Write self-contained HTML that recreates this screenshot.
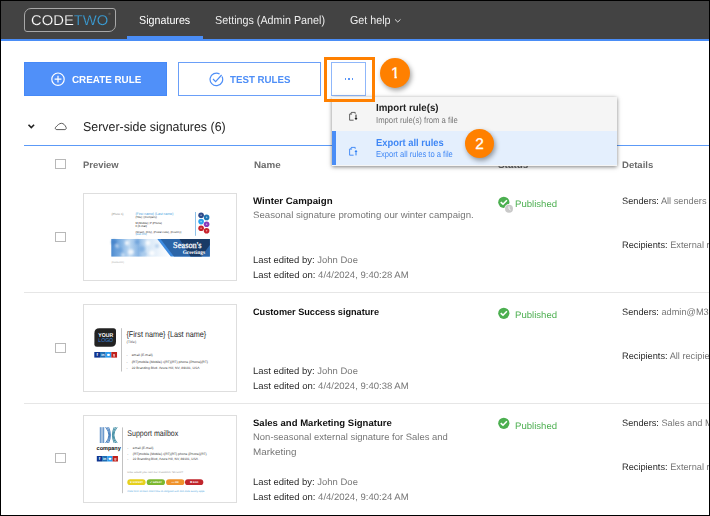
<!DOCTYPE html>
<html lang="en">
<head>
<meta charset="utf-8">
<title>CodeTwo Signatures</title>
<style>
html,body{margin:0;padding:0;}
body{width:710px;height:516px;position:relative;overflow:hidden;background:#fff;font-family:"Liberation Sans",sans-serif;color:#222;text-rendering:geometricPrecision;}
.abs{position:absolute;}
.t{position:absolute;white-space:nowrap;transform-origin:0 50%;line-height:1;}
#frame{position:absolute;left:0;top:0;width:708px;height:514px;border:1px solid #000;z-index:50;pointer-events:none;}
#hdr{left:1px;top:1px;width:708px;height:38px;background:#434343;}
#hline{left:1px;top:38.8px;width:708px;height:2.3px;background:#4a8df6;}
#tabline{left:127px;top:35.8px;width:75.8px;height:5px;background:#4a8df6;}
#logo{left:24px;top:8px;width:90px;height:22px;border:1px solid #a8a8a8;border-radius:7px 3px 7px 3px;background:#3e3e3e;}
.nav{color:#eee;font-size:11.6px;}
.btn{box-sizing:border-box;}
#create{left:24px;top:62px;width:143.4px;height:33.9px;background:#5090f9;border:1px solid #4689f7;}
#test{left:178px;top:61.8px;width:143px;height:34.4px;border:1px solid #6a9ff8;}
#more{left:331.2px;top:61.8px;width:35px;height:34.5px;border:1px solid #8fb7fa;}
#orect{left:324px;top:57px;width:51px;height:45px;border:3px solid #ff8000;box-sizing:border-box;}
.ball{border-radius:50%;background:#ff8000;box-shadow:1.5px 2.5px 5px rgba(0,0,0,.38);}
#menu{left:332px;top:97px;width:285.3px;height:68.5px;background:#f5f5f5;box-shadow:0 1px 4px rgba(0,0,0,.5);}
#mi2{left:0;top:34.4px;width:285.3px;height:34.1px;background:#e4effd;}
#mi2bar{left:0;top:34.4px;width:3.7px;height:34.1px;background:#4a8df6;}
.dot{top:78.1px;width:1.5px;height:1.7px;background:#5a96f7;}
.hd{font-weight:bold;color:#6b6b6b;font-size:9.3px;}
.cb{width:9px;height:8px;border:1px solid #b8b8b8;background:#fff;}
.thumb{left:83.4px;width:151.4px;height:86px;border:1px solid #dedede;background:#fff;}
.sep{left:24px;width:685px;height:1px;background:#e6e6e6;}
.nm{font-weight:bold;font-size:9.3px;color:#111;}
.gr{font-size:9.3px;color:#767676;}
.bk{font-size:9.3px;color:#2a2a2a;}
.pub{font-size:9.3px;color:#4caf50;}
</style>
</head>
<body>
<div class="abs" id="hdr"></div>
<div class="abs" id="hline"></div>
<div class="abs" id="tabline"></div>
<div class="abs" id="logo"></div>
<div class="t" id="lg" style="left:30.7px;top:14.0px;transform:scaleX(1.043);font-size:14.2px;color:#fff;-webkit-text-stroke:0.22px #3d3d3d;">CODE<span style="color:#3b9fd8">TWO</span></div>
<div class="t" id="reg" style="left:108.3px;top:13.2px;font-size:3.2px;color:#8a8a8a">®</div>
<div class="t nav" id="n1" style="left:139.0px;top:15.1px;transform:scaleX(0.924);color:#fff">Signatures</div>
<div class="t nav" id="n2" style="left:215.0px;top:15.1px;transform:scaleX(0.928);">Settings (Admin Panel)</div>
<div class="t nav" id="n3" style="left:349.8px;top:15.1px;transform:scaleX(0.926);">Get help</div>
<svg class="abs" style="left:393px;top:17px" width="10" height="8" viewBox="0 0 10 8"><path d="M2 2.4 L4.75 5 L7.5 2.4" fill="none" stroke="#ddd" stroke-width="1"/></svg>

<div class="abs btn" id="create"></div>
<svg class="abs" style="left:50px;top:71px" width="16" height="16" viewBox="0 0 16 16"><circle cx="8" cy="8.2" r="6.2" fill="none" stroke="#fff" stroke-width="1.2"/><path d="M8 4.8v6.8M4.6 8.2h6.8" stroke="#fff" stroke-width="1.2"/></svg>
<div class="t" id="b1" style="left:71.8px;top:76.0px;transform:scaleX(0.966);font-size:10.2px;font-weight:bold;color:#fff">CREATE RULE</div>
<div class="abs btn" id="test"></div>
<svg class="abs" style="left:208px;top:71px" width="16" height="16" viewBox="0 0 16 16"><path d="M14 5.6A6.3 6.3 0 1 1 11.6 3" fill="none" stroke="#4f8ff7" stroke-width="1.2"/><path d="M5 8l2.6 2.6 6-6.6" fill="none" stroke="#4f8ff7" stroke-width="1.2"/></svg>
<div class="t" id="b2" style="left:229.5px;top:76.0px;transform:scaleX(0.953);font-size:10.2px;font-weight:bold;color:#4f8ff7">TEST RULES</div>
<div class="abs btn" id="more"></div>
<div class="abs dot" style="left:344.5px"></div>
<div class="abs dot" style="left:348.1px"></div>
<div class="abs dot" style="left:351.7px"></div>

<!-- section header -->
<svg class="abs" style="left:27px;top:122px" width="9" height="8" viewBox="0 0 9 8"><path d="M1.5 2.8L4.3 5.6L7.1 2.8" fill="none" stroke="#222" stroke-width="1.6"/></svg>
<svg class="abs" style="left:53px;top:121px" width="16" height="11" viewBox="53 121 16 11"><path d="M56.8 129.6H64.9A1.5 1.5 0 0 0 66.1 127.4C65.2 125.3 63.6 123.3 61.4 123.3C59.3 123.3 57.6 125.2 55.7 127.2A1.4 1.4 0 0 0 56.8 129.6Z" fill="none" stroke="#4a4a4a" stroke-width="0.9"/></svg>
<div class="t" id="sh" style="left:83.2px;top:120.7px;transform:scaleX(0.969);font-size:12.8px;color:#222">Server-side signatures (6)</div>
<div class="abs" style="left:24px;top:145px;width:685px;height:1px;background:#5c9af7"></div>

<!-- table header -->
<div class="abs cb" style="left:55px;top:159px"></div>
<div class="t hd" id="h1" style="left:83.4px;top:160.5px;transform:scaleX(1.015);">Preview</div>
<div class="t hd" id="h2" style="left:254.0px;top:160.5px;transform:scaleX(1.054);">Name</div>
<div class="t hd" id="h3" style="left:498.2px;top:160.5px;transform:scaleX(1.066);">Status</div>
<div class="t hd" id="h4" style="left:622.3px;top:160.5px;transform:scaleX(1.026);">Details</div>

<!-- row 1 -->
<div class="abs cb" style="left:55px;top:232px"></div>
<div class="abs thumb" id="th1" style="top:193.4px"></div>
<!--TH1--><svg class="abs" style="left:84px;top:193px" width="152" height="88" viewBox="84 193 152 88"><defs><linearGradient id="sn" x1="0" y1="0" x2="1" y2="0"><stop offset="0" stop-color="#4c8bd0"/><stop offset=".15" stop-color="#7fb0e2"/><stop offset=".3" stop-color="#bfd9f2"/><stop offset=".45" stop-color="#8ab6e4"/><stop offset=".6" stop-color="#d3e5f6"/><stop offset=".8" stop-color="#eef5fc"/><stop offset="1" stop-color="#ffffff"/></linearGradient><filter id="bl" x="-20%" y="-20%" width="140%" height="140%"><feGaussianBlur stdDeviation="0.8"/></filter></defs><text x="111.5" y="215.2" font-size="3" fill="#8a8a8a" textLength="12" lengthAdjust="spacingAndGlyphs">{Photo 1}</text><text x="135.4" y="215" font-size="3.6" fill="#4a9fe0" textLength="38" lengthAdjust="spacingAndGlyphs">{First name} {Last name}</text><text x="135.4" y="217.7" font-size="2.9" fill="#333" textLength="21.5" lengthAdjust="spacingAndGlyphs">{Title} | {Company}</text><text x="135.4" y="224.3" font-size="2.9" fill="#222" textLength="26.5" lengthAdjust="spacingAndGlyphs">M {Mobile} | P {Phone}</text><text x="135.4" y="226.7" font-size="2.9" fill="#222" textLength="11.5" lengthAdjust="spacingAndGlyphs">E {E-mail}</text><text x="135.4" y="232.6" font-size="2.9" fill="#333" textLength="46" lengthAdjust="spacingAndGlyphs">{Street}, {City}, {Postal code}, {Country}</text><text x="135.4" y="235" font-size="2.9" fill="#4a9fe0" textLength="11.5" lengthAdjust="spacingAndGlyphs">{web link}</text><rect x="195.2" y="212" width="0.7" height="23.8" fill="#5fa8e0"/><circle cx="201.1" cy="215.2" r="2.8" fill="#2d4a8a"/><circle cx="201.1" cy="215.2" r="0.8" fill="#fff" opacity=".55"/><circle cx="206.6" cy="217.4" r="2.8" fill="#1f76b4"/><circle cx="206.6" cy="217.4" r="0.8" fill="#fff" opacity=".55"/><circle cx="201.1" cy="221.6" r="2.8" fill="#2aa3ef"/><circle cx="201.1" cy="221.6" r="0.8" fill="#fff" opacity=".55"/><circle cx="206.6" cy="224.2" r="2.8" fill="#8a3ab9"/><circle cx="206.6" cy="224.2" r="0.8" fill="#fff" opacity=".55"/><circle cx="201.1" cy="228.2" r="2.8" fill="#c8232c"/><circle cx="201.1" cy="228.2" r="0.8" fill="#fff" opacity=".55"/><circle cx="206.6" cy="230.7" r="2.8" fill="#c8232c"/><circle cx="206.6" cy="230.7" r="0.8" fill="#fff" opacity=".55"/><rect x="111.3" y="239" width="60" height="17.6" fill="url(#sn)"/><g filter="url(#bl)"><circle cx="114" cy="242" r="2.6" opacity="0.7" fill="#3f7fc8"/><circle cx="120" cy="250" r="2.6" opacity="0.5" fill="#5b96d6"/><circle cx="127" cy="243" r="2.2" opacity="0.8" fill="#fff"/><circle cx="131" cy="252" r="2.8" opacity="0.8" fill="#fff"/><circle cx="137" cy="242" r="2.2" opacity="0.6" fill="#5b96d6"/><circle cx="142" cy="249" r="3" opacity="0.6" fill="#6ea4dc"/><circle cx="148" cy="243" r="2.4" opacity="0.85" fill="#fff"/><circle cx="152" cy="253" r="2.6" opacity="0.9" fill="#fff"/><circle cx="157" cy="246" r="2" opacity="0.5" fill="#7fb0e2"/><circle cx="123" cy="255" r="1.6" opacity="0.7" fill="#fff"/><circle cx="117" cy="246" r="1.4" opacity="0.7" fill="#fff"/><circle cx="145" cy="254" r="1.6" opacity="0.5" fill="#7fb0e2"/></g><polygon points="157.3,239 209.8,239 209.8,256.6 170.8,256.6" fill="#3d8be0"/><polygon points="160.5,239 209.8,239 209.8,256.6 174,256.6" fill="#2b65a8"/><polygon points="179.5,239 209.8,239 209.8,245 201.5,256.6 190.5,256.6" fill="#183a66"/><text x="173.1" y="247.9" font-size="8.8" fill="#fff" textLength="28.4" lengthAdjust="spacingAndGlyphs" style="font-family:'Liberation Serif',serif;stroke:#fff;stroke-width:.25px">Season&#39;s</text><text x="182.7" y="253.5" font-size="5.6" fill="#fff" textLength="22.3" lengthAdjust="spacingAndGlyphs" font-weight="bold" style="font-family:'Liberation Serif',serif">Greetings</text><text x="111.5" y="262.9" font-size="2.6" fill="#aaa" textLength="12.5" lengthAdjust="spacingAndGlyphs">{Disclaimer}</text></svg><!--/TH1-->
<div class="t nm" id="r1a" style="left:253.4px;top:197.2px;transform:scaleX(1.042);">Winter Campaign</div>
<div class="t gr" id="r1b" style="left:253.4px;top:211.3px;transform:scaleX(1.039);">Seasonal signature promoting our winter campaign.</div>
<div class="t bk" id="r1c" style="left:253.4px;top:256.4px;transform:scaleX(1.020);">Last edited by: <span class="gr">John Doe</span></div>
<div class="t bk" id="r1d" style="left:253.4px;top:271.2px;transform:scaleX(1.024);">Last edited on: <span class="gr">4/4/2024, 9:40:28 AM</span></div>
<svg class="abs" style="left:497px;top:196px" width="18" height="19" viewBox="0 0 18 19"><circle cx="6.8" cy="6.3" r="5.6" fill="#4caf50"/><path d="M3.7 6.2l2.3 2 3.9-3.9" fill="none" stroke="#fff" stroke-width="1.6"/><circle cx="12" cy="12.7" r="4.7" fill="#fff"/><circle cx="12" cy="12.7" r="4" fill="#c9c9c9"/><path d="M12 10.4v2.4l1.6 1.2" fill="none" stroke="#fff" stroke-width="0.9"/></svg>
<div class="t pub" id="r1p" style="left:515.0px;top:199.8px;transform:scaleX(1.031);">Published</div>
<div class="t bk" id="r1s" style="left:622.3px;top:197.1px;transform:scaleX(0.991);">Senders: <span class="gr">All senders</span></div>
<div class="t bk" id="r1r" style="left:622.3px;top:241.0px;transform:scaleX(0.991);">Recipients: <span class="gr">External recipients</span></div>
<div class="abs sep" style="top:292px"></div>

<!-- row 2 -->
<div class="abs cb" style="left:55px;top:342.7px"></div>
<div class="abs thumb" id="th2" style="top:304.1px"></div>
<!--TH2--><svg class="abs" style="left:84px;top:304px" width="152" height="88" viewBox="84 304 152 88"><path d="M99.4 328.2H113.5Q116 328.2 116 330.7V341.7Q116 346.7 111 346.7H96.9Q94.4 346.7 94.4 344.2V333.2Q94.4 328.2 99.4 328.2Z" fill="#222"/><text x="98.3" y="336.7" font-size="5.6" fill="#fff" textLength="14.8" lengthAdjust="spacingAndGlyphs" font-weight="bold">YOUR</text><text x="98.3" y="342.2" font-size="5.6" fill="#3b82d6" textLength="14.8" lengthAdjust="spacingAndGlyphs">LOGO</text><rect x="94.30" y="352" width="5.72" height="5.6" fill="#0f3590"/><rect x="99.97" y="352" width="5.72" height="5.6" fill="#1f6fb5"/><rect x="105.65" y="352" width="5.72" height="5.6" fill="#2a9cf0"/><rect x="111.32" y="352" width="5.72" height="5.6" fill="#c0201c"/><text x="97.14" y="356.30" font-size="4.2" font-weight="bold" fill="#fff" text-anchor="middle">f</text><text x="102.81" y="356.10" font-size="3.6" font-weight="bold" fill="#fff" text-anchor="middle">in</text><ellipse cx="108.49" cy="354.90" rx="1.5" ry="1.1" fill="#fff"/><text x="114.16" y="356.10" font-size="3.6" font-weight="bold" fill="#fff" text-anchor="middle" opacity=".85">g</text><rect x="121.2" y="328.2" width="0.6" height="43.3" fill="#999"/><text x="126.4" y="336.8" font-size="8.3" fill="#2b2b2b" textLength="79.8" lengthAdjust="spacingAndGlyphs">{First name} {Last name}</text><text x="126.4" y="343.2" font-size="3.4" fill="#555" textLength="10" lengthAdjust="spacingAndGlyphs">{Title}</text><text x="126.4" y="356.1" font-size="3.2" fill="#333">-</text><text x="131.7" y="356.1" font-size="3.2" fill="#3c3c3c" textLength="21" lengthAdjust="spacingAndGlyphs">email {E-mail}</text><text x="126.4" y="362.6" font-size="3.2" fill="#333">-</text><text x="131.7" y="362.6" font-size="3.2" fill="#3c3c3c" textLength="76.3" lengthAdjust="spacingAndGlyphs">{RT}mobile {Mobile} •{RT}{RT} phone {Phone}{RT}</text><text x="126.4" y="368.8" font-size="3.2" fill="#333">-</text><text x="131.7" y="368.8" font-size="3.2" fill="#3c3c3c" textLength="67.7" lengthAdjust="spacingAndGlyphs">22 Branding Blvd. Azure Hill, NV, 89101, USA</text></svg><!--/TH2-->
<div class="t nm" id="r2a" style="left:253.4px;top:307.9px;transform:scaleX(0.983);">Customer Success signature</div>
<div class="t bk" id="r2c" style="left:253.4px;top:367.1px;transform:scaleX(1.020);">Last edited by: <span class="gr">John Doe</span></div>
<div class="t bk" id="r2d" style="left:253.4px;top:381.9px;transform:scaleX(1.024);">Last edited on: <span class="gr">4/4/2024, 9:40:38 AM</span></div>
<svg class="abs" style="left:497px;top:306.7px" width="18" height="19" viewBox="0 0 18 19"><circle cx="6.8" cy="6.3" r="5.6" fill="#4caf50"/><path d="M3.7 6.2l2.3 2 3.9-3.9" fill="none" stroke="#fff" stroke-width="1.6"/></svg>
<div class="t pub" id="r2p" style="left:515.0px;top:310.5px;transform:scaleX(1.031);">Published</div>
<div class="t bk" id="r2s" style="left:622.3px;top:307.8px;transform:scaleX(0.991);">Senders: <span class="gr">admin@M365x12345678.onmicrosoft.com</span></div>
<div class="t bk" id="r2r" style="left:622.3px;top:351.7px;transform:scaleX(0.991);">Recipients: <span class="gr">All recipients</span></div>
<div class="abs sep" style="top:403px"></div>

<!-- row 3 -->
<div class="abs cb" style="left:55px;top:453.4px"></div>
<div class="abs thumb" id="th3" style="top:414.9px"></div>
<!--TH3--><svg class="abs" style="left:84px;top:415px" width="152" height="88" viewBox="84 415 152 88"><g fill="none" stroke="#2a6cb5" stroke-width="0.85"><path d="M100.3 427.2V443"/><path d="M102 427.2V443"/><path d="M103.7 427.2V443"/><path d="M105.6 427.2Q112.2 435.1 105.6 443" stroke="#2a6cb5"/><path d="M117.2 427.2Q110.6 435.1 117.2 443" stroke="#2a7f9a"/><path d="M107.1 427.2Q112.2 435.1 107.1 443" stroke="#2a6cb5"/><path d="M115.7 427.2Q110.6 435.1 115.7 443" stroke="#2a7f9a"/><path d="M108.6 427.2Q112.2 435.1 108.6 443" stroke="#2a6cb5"/><path d="M114.2 427.2Q110.6 435.1 114.2 443" stroke="#2a7f9a"/></g><text x="96.6" y="449.8" font-size="5.5" fill="#111" textLength="24.2" lengthAdjust="spacingAndGlyphs" font-weight="bold">company</text><rect x="96.80" y="456" width="5.33" height="5.5" fill="#0f3590"/><rect x="102.08" y="456" width="5.33" height="5.5" fill="#1f6fb5"/><rect x="107.35" y="456" width="5.33" height="5.5" fill="#2a9cf0"/><rect x="112.62" y="456" width="5.33" height="5.5" fill="#c0201c"/><text x="99.44" y="460.25" font-size="4.2" font-weight="bold" fill="#fff" text-anchor="middle">f</text><text x="104.71" y="460.05" font-size="3.6" font-weight="bold" fill="#fff" text-anchor="middle">in</text><ellipse cx="109.99" cy="458.85" rx="1.5" ry="1.1" fill="#fff"/><text x="115.26" y="460.05" font-size="3.6" font-weight="bold" fill="#fff" text-anchor="middle" opacity=".85">g</text><rect x="122.1" y="427.4" width="0.6" height="65.8" fill="#999"/><text x="127.3" y="436" font-size="8.2" fill="#2b2b2b" textLength="51" lengthAdjust="spacingAndGlyphs">Support mailbox</text><text x="127.3" y="448.5" font-size="3.2" fill="#333">-</text><text x="132.8" y="448.5" font-size="3.2" fill="#3c3c3c" textLength="20.5" lengthAdjust="spacingAndGlyphs">email {E-mail}</text><text x="127.3" y="454.8" font-size="3.2" fill="#333">-</text><text x="132.8" y="454.8" font-size="3.2" fill="#3c3c3c" textLength="73.8" lengthAdjust="spacingAndGlyphs">{RT}mobile {Mobile} •{RT}{RT} phone {Phone}{RT}</text><text x="127.3" y="460.2" font-size="3.2" fill="#333">-</text><text x="132.8" y="460.2" font-size="3.2" fill="#3c3c3c" textLength="65.2" lengthAdjust="spacingAndGlyphs">22 Branding Blvd, Azure Hill, NV, 89101, USA</text><text x="127.3" y="473.3" font-size="2.6" fill="#999" textLength="55.9" lengthAdjust="spacingAndGlyphs">How would you rate our Customer Service?</text><rect x="127.3" y="479.2" width="18.3" height="5.9" rx="2.9" fill="#e6d01c"/><text x="136.45" y="483.1" font-size="2.6" fill="#fff" font-weight="bold" text-anchor="middle">★ EXPERT</text><rect x="146.7" y="479.2" width="18.3" height="5.9" rx="2.9" fill="#7cb82f"/><text x="155.85" y="483.1" font-size="2.6" fill="#fff" font-weight="bold" text-anchor="middle">✔ GREAT</text><rect x="166.1" y="479.2" width="18.3" height="5.9" rx="2.9" fill="#f0932b"/><text x="175.25" y="483.1" font-size="2.6" fill="#fff" font-weight="bold" text-anchor="middle">••• OK</text><rect x="185" y="479.2" width="18.3" height="5.9" rx="2.9" fill="#c0262c"/><text x="194.15" y="483.1" font-size="2.6" fill="#fff" font-weight="bold" text-anchor="middle">✖ BAD</text><text x="127.3" y="491.8" font-size="2.6" fill="#4a9fe0" textLength="77.1" lengthAdjust="spacingAndGlyphs">Click here to learn more how to integrate with one-click survey apps</text></svg><!--/TH3-->
<div class="t nm" id="r3a" style="left:253.4px;top:418.6px;transform:scaleX(1.025);">Sales and Marketing Signature</div>
<div class="t gr" id="r3b" style="left:253.4px;top:432.7px;transform:scaleX(1.019);">Non-seasonal external signature for Sales and</div>
<div class="t gr" id="r3b2" style="left:253.4px;top:447.5px;transform:scaleX(1.063);">Marketing</div>
<div class="t bk" id="r3c" style="left:253.4px;top:477.8px;transform:scaleX(1.020);">Last edited by: <span class="gr">John Doe</span></div>
<div class="t bk" id="r3d" style="left:253.4px;top:492.6px;transform:scaleX(1.024);">Last edited on: <span class="gr">4/4/2024, 9:40:24 AM</span></div>
<svg class="abs" style="left:497px;top:417.4px" width="18" height="19" viewBox="0 0 18 19"><circle cx="6.8" cy="6.3" r="5.6" fill="#4caf50"/><path d="M3.7 6.2l2.3 2 3.9-3.9" fill="none" stroke="#fff" stroke-width="1.6"/></svg>
<div class="t pub" id="r3p" style="left:515.0px;top:421.7px;transform:scaleX(1.031);">Published</div>
<div class="t bk" id="r3s" style="left:622.3px;top:418.5px;transform:scaleX(0.991);">Senders: <span class="gr">Sales and Marketing</span></div>
<div class="t bk" id="r3r" style="left:622.3px;top:463.1px;transform:scaleX(0.991);">Recipients: <span class="gr">External recipients</span></div>

<!-- dropdown -->
<div class="abs" id="menu">
  <div class="abs" id="mi2"></div>
  <div class="abs" id="mi2bar"></div>
  <svg class="abs" style="left:16px;top:14px" width="11" height="11" viewBox="0 0 11 11"><path d="M5.6 9.2H1.6V3.2L3.4 1.4H7.2V2.8" fill="none" stroke="#4a4a4a" stroke-width="0.85"/><path d="M1.6 3.4H3.6V1.4" fill="none" stroke="#4a4a4a" stroke-width="0.6"/><path d="M8 3.6V8.4" stroke="#222" stroke-width="1"/><path d="M6.5 7L8 9l1.5-2z" fill="#222"/></svg>
  <svg class="abs" style="left:16px;top:49px" width="11" height="11" viewBox="0 0 11 11"><path d="M5.6 9.2H1.6V3.2L3.4 1.4H7.2V2.8" fill="none" stroke="#2f80f5" stroke-width="0.85"/><path d="M1.6 3.4H3.6V1.4" fill="none" stroke="#2f80f5" stroke-width="0.6"/><path d="M8 4.6V9.4" stroke="#2f80f5" stroke-width="1"/><path d="M6.5 6L8 4l1.5 2z" fill="#2f80f5"/></svg>
  <div class="t" id="m1a" style="left:43.5px;top:7.0px;transform:scaleX(0.953);font-size:10.2px;font-weight:bold;color:#222">Import rule(s)</div>
  <div class="t" id="m1b" style="left:43.5px;top:18.8px;transform:scaleX(0.888);font-size:8.7px;color:#777">Import rule(s) from a file</div>
  <div class="t" id="m2a" style="left:43.5px;top:41.6px;transform:scaleX(0.920);font-size:10.2px;font-weight:bold;color:#3f87f5">Export all rules</div>
  <div class="t" id="m2b" style="left:43.5px;top:52.8px;transform:scaleX(0.874);font-size:8.7px;color:#3f87f5">Export all rules to a file</div>
</div>
<div class="abs" id="orect"></div>
<div class="abs ball" id="ball1" style="left:379.5px;top:57.7px;width:30px;height:30px;"></div>
<div class="t" id="bt1" style="left:391.1px;top:66px;font-size:15.4px;color:#fff;-webkit-text-stroke:0.3px #fff;clip-path:polygon(0 0,100% 0,100% 64.9%,66% 64.9%,66% 100%,39% 100%,39% 64.9%,0 64.9%)">1</div>
<div class="abs ball" id="ball2" style="left:464.7px;top:128.7px;width:29.8px;height:29.8px;"></div>
<div class="t" id="bt2" style="left:475.2px;top:136.6px;font-size:15.4px;color:#fff;-webkit-text-stroke:0.3px #fff">2</div>

<div id="frame"></div>
</body>
</html>
